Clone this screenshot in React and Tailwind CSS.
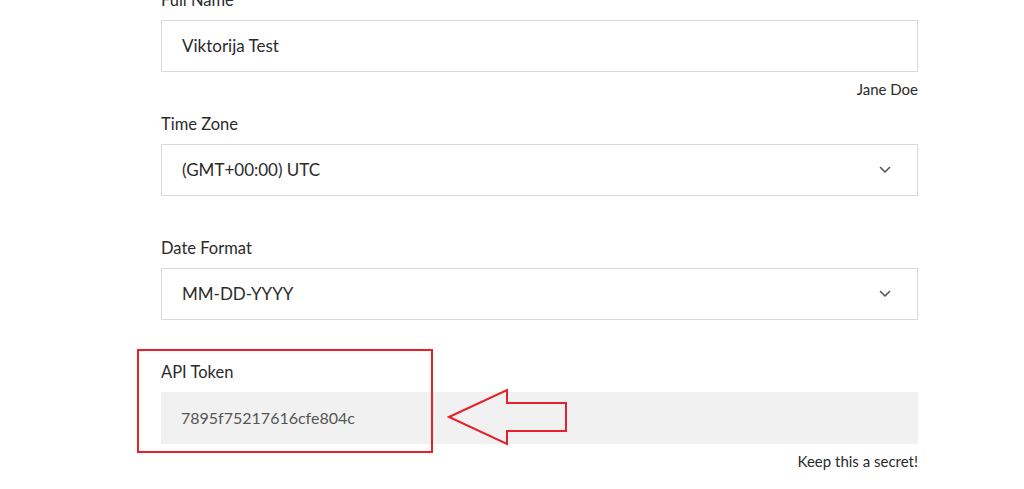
import React, { useState } from "react";

const Chevron = () => (
  <svg width="12" height="8" viewBox="0 0 12 8" className="text-[#555]">
    <path d="M1.5 1.5 L6 6 L10.5 1.5" fill="none" stroke="currentColor" strokeWidth="1.6" strokeLinecap="round" strokeLinejoin="round" />
  </svg>
);

const Field = ({ label, helper, children }) => (
  <div className="flex flex-col">
    <label className="h-5 leading-5 text-[16.5px] text-[#2b2b2b] mb-[10px]">{label}</label>
    {children}
    <div className="h-[42px] pt-[7px] text-right text-[15px] leading-5 text-[#2b2b2b]">{helper}</div>
  </div>
);

const SelectBox = ({ value }) => (
  <div className="h-[52px] border border-[#dadada] bg-white flex items-center justify-between pl-5 pr-[26px] text-[17px] text-[#2b2b2b]">
    <span>{value}</span>
    <Chevron />
  </div>
);

const App = () => {
  const [form] = useState({
    name: "Viktorija Test",
    timezone: "(GMT+00:00) UTC",
    dateFormat: "MM-DD-YYYY",
    token: "7895f75217616cfe804c",
  });

  return (
    <div className="relative w-[1024px] h-[489px] overflow-hidden bg-white" style={{ fontFamily: "Lato, 'Open Sans', sans-serif" }}>
      <div className="w-[757px] ml-[161px] mt-[-10px]">
        <Field label="Full Name" helper="Jane Doe">
          <div className="h-[52px] border border-[#dadada] bg-white flex items-center pl-5 text-[17px] text-[#2b2b2b]">
            {form.name}
          </div>
        </Field>
        <Field label="Time Zone">
          <SelectBox value={form.timezone} />
        </Field>
        <Field label="Date Format">
          <SelectBox value={form.dateFormat} />
        </Field>
        <Field label="API Token" helper="Keep this a secret!">
          <div className="h-[52px] bg-[#f1f1f1] flex items-center pl-5 text-[16px] text-[#555]">
            {form.token}
          </div>
        </Field>
      </div>

      {/* annotation overlay */}
      <div className="absolute left-[137px] top-[349px] w-[296px] h-[104px] border-2 border-[#e5212b]" />
      <svg className="absolute left-0 top-0" width="1024" height="489">
        <polygon
          points="449,417 507,390 507,403 566,403 566,431 507,431 507,444"
          fill="none"
          stroke="#e5212b"
          strokeWidth="2"
        />
      </svg>
    </div>
  );
};

export default App;
